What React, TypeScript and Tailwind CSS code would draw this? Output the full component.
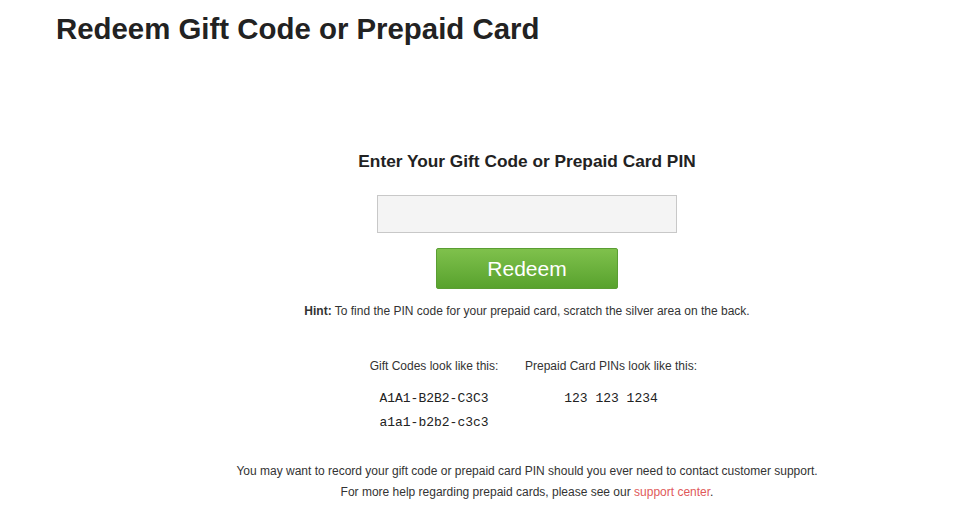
export default function App() {
  return (
    <div className="w-[970px] h-[525px] bg-white overflow-hidden" style={{ fontFamily: '"Liberation Sans", Arial, sans-serif' }}>
      <h1 className="ml-[56px] pt-[12px] text-[29.4px] leading-[34px] font-bold text-[#222]">Redeem Gift Code or Prepaid Card</h1>
      <div className="pl-[84px] flex flex-col items-center">
        <h2 className="mt-[105px] text-[17.3px] leading-[20px] font-bold text-[#222]">Enter Your Gift Code or Prepaid Card PIN</h2>
        <input type="text" className="mt-[24px] w-[300px] h-[38px] bg-[#f4f4f4] border border-[#c8c8c8] outline-none" />
        <button className="mt-[15px] w-[182px] h-[41px] rounded-[2px] bg-gradient-to-b from-[#7fc14c] to-[#58a22d] border border-[#5a9e33] text-white text-[21px] leading-[24px]">Redeem</button>
        <p className="mt-[14px] text-[12px] leading-[16px] text-[#333]"><b>Hint:</b> To find the PIN code for your prepaid card, scratch the silver area on the back.</p>
        <div className="mt-[39px] flex text-[12px] leading-[16px] text-[#333]">
          <div className="w-[168px] flex flex-col items-center">
            <div>Gift Codes look like this:</div>
            <div className="mt-[17px] text-[13px] leading-[16px] text-[#222]" style={{ fontFamily: '"Liberation Mono", "Courier New", monospace' }}>A1A1-B2B2-C3C3</div>
            <div className="mt-[8px] text-[13px] leading-[16px] text-[#222]" style={{ fontFamily: '"Liberation Mono", "Courier New", monospace' }}>a1a1-b2b2-c3c3</div>
          </div>
          <div className="w-[186px] flex flex-col items-center">
            <div>Prepaid Card PINs look like this:</div>
            <div className="mt-[17px] text-[13px] leading-[16px] text-[#222]" style={{ fontFamily: '"Liberation Mono", "Courier New", monospace' }}>123 123 1234</div>
          </div>
        </div>
        <p className="mt-[30px] text-[12px] leading-[21px] text-[#333] text-center">
          You may want to record your gift code or prepaid card PIN should you ever need to contact customer support.<br />
          For more help regarding prepaid cards, please see our <a className="text-[#e05a5a]">support center</a>.
        </p>
      </div>
    </div>
  );
}
